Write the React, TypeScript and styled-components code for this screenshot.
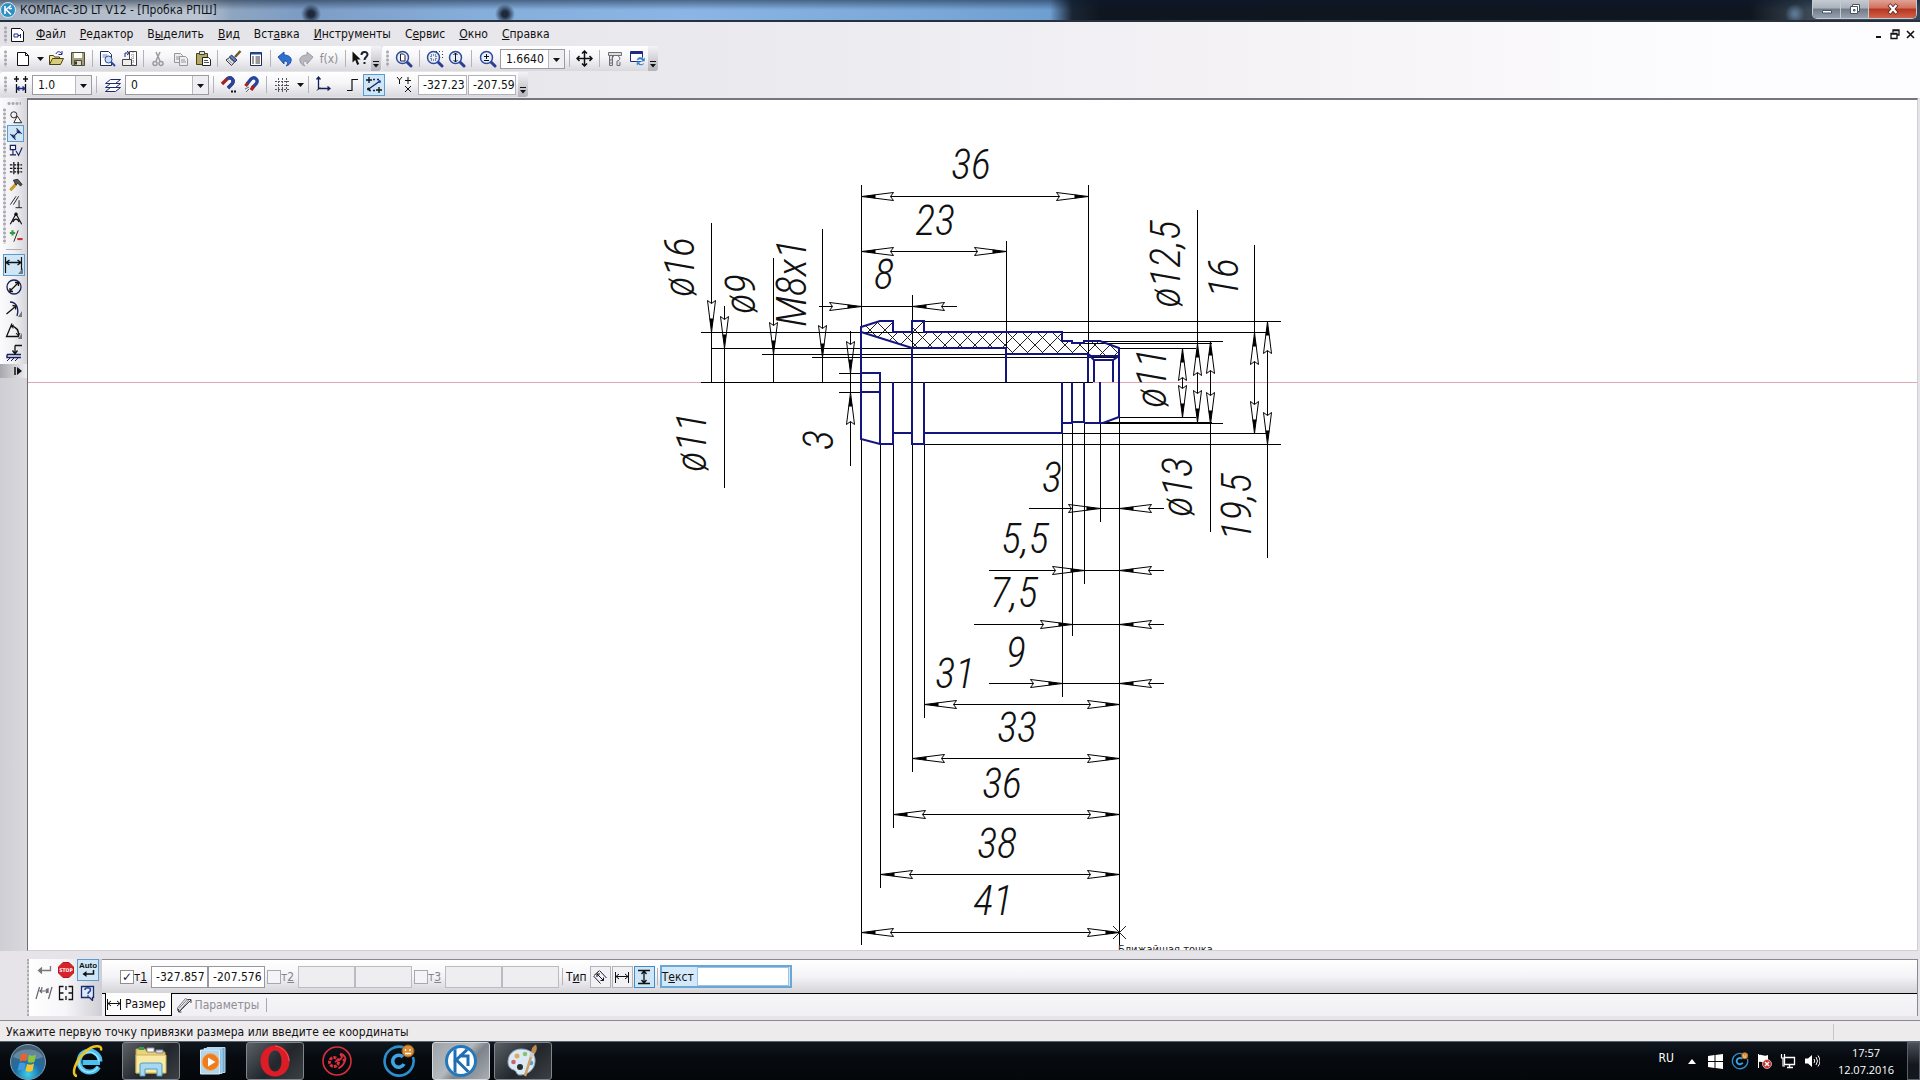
import React from 'react';
import styled, { createGlobalStyle, css } from 'styled-components';

const UI = '"DejaVu Sans Condensed", "DejaVu Sans", sans-serif';

const Global = createGlobalStyle`
  * { box-sizing: border-box; }
  body { margin: 0; background: #e6e4e8; }
  button, input, select { font: inherit; color: inherit; margin: 0; }
  button { padding: 0; border: 0; background: none; }
`;

/* ---------- window frame ---------- */

const Shell = styled.div`
  display: flex;
  flex-direction: column;
  min-height: 100vh;
  font: 12px/16px ${UI};
  color: #111;
  overflow: hidden;
`;

const TitleBar = styled.header`
  display: flex;
  align-items: center;
  height: 22px;
  padding-right: 3px;
  border-bottom: 2px solid #26303e;
  color: #10141c;
  background:
    radial-gradient(circle at 311px 14px, #1c2a3c 3px, #1c2a3c00 10px),
    radial-gradient(circle at 505px 14px, #1c2a3c 3px, #1c2a3c00 10px),
    radial-gradient(circle at 1795px 14px, #5c7590 2px, #5c759000 10px),
    linear-gradient(180deg, #0a1a3080 0, #0a1a3000 10px),
    linear-gradient(90deg, #a9b4c2 0, #bcc5d0 200px, #8ea5c0 232px, #7d9cc4 300px, #86aedb 480px, #8ab5e4 690px, #7ba8d8 920px, #6f9ed0 1050px, #1b2634 1072px, #10161f 1100px, #10161f calc(100% - 170px), #3c4955 calc(100% - 110px), #39465a 100%);
`;

const Title = styled.h1`
  flex: 1;
  display: flex;
  align-items: center;
  gap: 4px;
  margin: 0;
  padding-left: 0;
  font-size: 12px;
  font-weight: 400;
`;

const WindowControls = styled.div`
  display: flex;
  align-self: flex-start;
  height: 19px;
  border: 1px solid #c3cad2;
  border-top: 0;
  border-radius: 0 0 5px 5px;
  overflow: hidden;
`;

const WindowButton = styled.button<{ $close?: boolean }>`
  display: grid;
  place-items: center;
  width: ${p => (p.$close ? 47 : 28)}px;
  border-right: ${p => (p.$close ? '0' : '1px solid #c3cad2')};
  background: ${p => (p.$close
    ? 'linear-gradient(#e0a295 0, #d1705e 45%, #b83420 50%, #d0644c 100%)'
    : 'linear-gradient(#c6cbd2 0, #a9b1bb 45%, #6f7a88 50%, #98a2ae 100%)')};
`;

const Chrome = styled.div`
  background: linear-gradient(90deg, #e3e2e6 0, #ebeaee 40%, #f6f4f7 70%, #fdfcfe 90%);
`;

const MenuBar = styled.nav`
  display: flex;
  align-items: center;
  height: 24px;
  padding: 0 5px 0 4px;
`;

const MenuItem = styled.button`
  margin-right: 14px;
  white-space: nowrap;
`;

const MdiControls = styled.div`
  display: flex;
  align-items: center;
  gap: 6px;
  margin-left: auto;
`;

const Grip = styled.span<{ $flat?: boolean }>`
  flex: none;
  ${p => (p.$flat
    ? css`width: 14px; height: 3px; background: radial-gradient(circle, #a9a9b0 1px, #0000 2px) 0 0 / 4px 3px;`
    : css`width: 3px; height: 17px; background: radial-gradient(circle, #a9a9b0 1px, #0000 2px) 0 0 / 3px 4px;`)}
`;

const ToolRow = styled.div`
  display: flex;
  gap: 1px;
  height: 26px;
`;

const Toolbar = styled.div`
  display: flex;
  align-items: center;
  height: 25px;
  padding-left: 4px;
  border-radius: 3px;
  background: linear-gradient(#fff 0, #f6f5f8 45%, #d9d8dd 100%);
`;

const ToolButton = styled.button<{ $w?: number; $on?: boolean }>`
  display: grid;
  place-items: center;
  width: ${p => p.$w ?? 22}px;
  height: 22px;
  flex: none;
  ${p => p.$on && css`border: 1px solid #5b9bd0; background: #cfe6f7;`}
`;

const Separator = styled.span<{ $gap?: number }>`
  flex: none;
  width: 1px;
  height: 17px;
  margin: 0 ${p => p.$gap ?? 4}px;
  background: #b4b3ba;
`;

const Overflow = styled.button`
  align-self: stretch;
  display: flex;
  align-items: flex-end;
  justify-content: center;
  width: 10px;
  padding-bottom: 3px;
  border-radius: 0 3px 3px 0;
  background: linear-gradient(#f4f3f6, #b4b3ba);
`;

const Combo = styled.div<{ $w: number }>`
  position: relative;
  flex: none;
  width: ${p => p.$w}px;
  height: 20px;
  border: 1px solid #9c9ba2;
  background: linear-gradient(90deg, #fff calc(100% - 16px), #b9b8be calc(100% - 16px), #b9b8be calc(100% - 15px), #efeef1 calc(100% - 15px));
  select {
    appearance: none;
    width: 100%;
    height: 18px;
    padding: 0 0 0 5px;
    border: 0;
    background: none;
  }
  svg { position: absolute; right: 4px; top: 8px; pointer-events: none; }
`;

const Field = styled.input<{ $w: number }>`
  flex: none;
  width: ${p => p.$w}px;
  height: 20px;
  padding: 0 0 0 4px;
  border: 1px solid #b3b2b8;
  background: #fff;
`;

/* ---------- work area ---------- */

const Work = styled.main`
  flex: 1;
  display: flex;
  min-height: 0;
  padding-right: 2px;
`;

const SideBar = styled.aside`
  width: 27px;
  flex: none;
  background: linear-gradient(90deg, #cfced4 0, #d9d8dd 100%);
`;

const SideTools = styled.div`
  display: flex;
  flex-direction: column;
  align-items: center;
  padding-top: 4px;
  border-radius: 0 0 3px 3px;
  background: linear-gradient(90deg, #fbfafc 0, #f1f0f3 50%, #d5d4da 100%);
  & > ${Grip} { margin-bottom: 3px; }
`;

const PanelRow = styled.div`
  display: flex;
  align-items: center;
  height: 17px;
  gap: 1px;
`;

const PanelButton = styled.button<{ $on?: boolean }>`
  display: grid;
  place-items: center;
  width: 17px;
  height: 17px;
  svg { width: 14px; height: 14px; }
  ${p => p.$on && css`border: 1px solid #5b9bd0; background: #cfe6f7;`}
`;

const SideRule = styled.span`
  width: 16px;
  height: 1px;
  margin: 5px 0 4px;
  background: #b0afb6;
`;

const BigButton = styled.button<{ $on?: boolean }>`
  display: grid;
  place-items: center;
  width: 22px;
  height: 22px;
  ${p => p.$on && css`border: 1px solid #5b9bd0; background: #cfe6f7;`}
`;

const SideEnd = styled.button`
  display: flex;
  align-items: center;
  justify-content: flex-end;
  width: 100%;
  height: 14px;
  padding-right: 5px;
  background: linear-gradient(90deg, #a9a8af, #efeef1);
`;

const Sheet = styled.div`
  flex: 1;
  min-width: 0;
  min-height: 852px;
  display: flex;
  border: 1px solid #6c6b70;
  border-top: 2px solid #77767c;
  border-right-color: #d0cfd4;
  border-bottom-color: #d0cfd4;
  background: #fff;
  overflow: hidden;
  svg { flex: 1; width: 100%; min-width: 0; display: block; }
`;

/* ---------- property panel ---------- */

const Properties = styled.section`
  display: flex;
  margin: 8px 2px 0 27px;
  padding-bottom: 4px;
`;

const CommandPad = styled.div`
  display: grid;
  grid-template-columns: repeat(3, 22px);
  grid-auto-rows: 23px;
  align-content: start;
  width: 75px;
  flex: none;
  padding: 0 0 8px 4px;
  border-left: 2px dotted #a9a9b0;
  background: linear-gradient(90deg, #fff 0, #f6f5f8 50%, #cfced4 100%);
`;

const PropBody = styled.div`
  flex: 1;
  min-width: 0;
  border: 1px solid #8a8990;
  border-left: 0;
  border-bottom: 0;
  background: linear-gradient(#fff 0, #f0eff2 100%);
`;

const PropRow = styled.div`
  display: flex;
  align-items: center;
  height: 34px;
  padding-left: 18px;
  border-bottom: 1px solid #000;
  background: linear-gradient(#fff 0, #f4f3f6 50%, #d4d3d8 100%);
`;

const Pair = styled.div<{ $off?: boolean }>`
  display: flex;
  align-items: center;
  color: ${p => (p.$off ? '#85848a' : '#111')};
  label { display: flex; align-items: center; width: 31px; }
  ${Field} {
    height: 22px;
    width: 57px;
    background: ${p => (p.$off ? '#eeedf0' : '#fff')};
    border-color: ${p => (p.$off ? '#bcbbc1' : '#98979e')};
  }
`;

const Tick = styled.input`
  appearance: none;
  width: 14px;
  height: 14px;
  border: 1px solid #8e8d94;
  background: #fff;
  &:checked::after {
    content: '✓';
    display: block;
    font: 12px/12px "DejaVu Sans";
    text-align: center;
    color: #223;
  }
  &:disabled { border-color: #a9a8af; background: #f4f3f6; }
`;

const ModeLabel = styled.span`
  margin-right: 2px;
`;

const ModeButton = styled.button<{ $on?: boolean }>`
  display: grid;
  place-items: center;
  width: 21px;
  height: 22px;
  margin-left: 1px;
  border: 1px solid ${p => (p.$on ? '#3d8bc8' : '#b3b2b8')};
  background: ${p => (p.$on ? '#cfe6f7' : '#f1f0f3')};
`;

const TextBox = styled.label`
  display: flex;
  align-items: center;
  gap: 3px;
  height: 23px;
  padding: 0 1px 0 0;
  border: 2px solid #6aa7d6;
  background: #d3e8f8;
  input { width: 92px; height: 19px; border: 1px solid #9cc3e4; background: #fff; padding: 0 3px; }
`;

const Tabs = styled.div`
  display: flex;
  height: 22px;
`;

const Tab = styled.button<{ $on?: boolean }>`
  display: flex;
  align-items: center;
  gap: 3px;
  height: 22px;
  padding: 0 5px 0 4px;
  color: ${p => (p.$on ? '#111' : '#8f8e95')};
  ${p => (p.$on
    ? css`margin: -1px 0 0 3px; border: 1px solid #000; border-top: 0; background: #fdfdfe; height: 23px; padding: 0 5px 0 0;`
    : css`&::after { content: ''; width: 1px; height: 14px; margin-left: 4px; background: #a9a8af; }`)}
`;

const StatusBar = styled.footer`
  display: flex;
  align-items: center;
  height: 21px;
  border-top: 1px solid #8a8990;
  background: #eeebed;
  padding: 2px 0 0 6px;
`;

const StatusCell = styled.span`
  width: 87px;
  height: 16px;
  margin-left: auto;
  border-left: 1px solid #c6c4c9;
`;

/* ---------- taskbar ---------- */

const TaskBar = styled.footer`
  display: flex;
  align-items: center;
  height: 39px;
  border-top: 1px solid #59636c;
  background: linear-gradient(#10171e 0, #070b10 40%, #04070a 100%);
  color: #fff;
`;

const TaskButton = styled.button<{ $w: number; $open?: boolean; $active?: boolean }>`
  display: grid;
  place-items: center;
  flex: none;
  width: ${p => p.$w}px;
  height: 38px;
  margin: 0 2px;
  border: 1px solid #0000;
  border-radius: 3px;
  ${p => p.$open && css`border-color: #80868c; background: linear-gradient(135deg, #5c6166 0, #2b3036 45%, #23272c 55%, #3b4045 100%);`}
  ${p => p.$active && css`border-color: #d4d9dd; background: linear-gradient(135deg, #9da3a9 0, #b4b9be 45%, #7d838a 60%, #a9aeb4 100%);`}
`;

const Tray = styled.div`
  display: flex;
  align-items: center;
  height: 38px;
  margin-left: auto;
`;

const Language = styled.span`
  margin: 0 6px 6px 0;
`;

const TrayButton = styled.button`
  display: grid;
  place-items: center;
  width: 24px;
  height: 24px;
`;

const Clock = styled.time`
  margin: 0 13px 0 14px;
  font: 11px/17px "Open Sans", sans-serif;
  text-align: center;
`;

const ShowDesktop = styled.button`
  width: 13px;
  height: 38px;
  border: 1px solid #5a6067;
  background: linear-gradient(#4a5058 0, #14181d 60%);
`;

/* ---------- icons ---------- */

type IconProps = { size?: number; w?: number; h?: number; children: React.ReactNode; box?: string };
const Icon = ({ size = 16, w, h, box, children }: IconProps) => (
  <svg width={w ?? size} height={h ?? size} viewBox={box ?? `0 0 ${w ?? size} ${h ?? size}`} fill="none" stroke="#111" strokeWidth={1} aria-hidden="true">{children}</svg>
);

const Caret = () => <Icon w={7} h={4}><path d="M0 0h7L3.500 4z" fill="#111" stroke="none" /></Icon>;
const OverflowMark = () => <Icon w={6} h={7}><path d="M0 .5h6" /><path d="M0 3h6L3 6.500z" fill="#111" stroke="none" /></Icon>;

const Magnifier = ({ children }: { children?: React.ReactNode }) => (
  <Icon size={18}>
    <path d="M11 11l5 5" stroke="#2b3f92" strokeWidth={3} strokeLinecap="round" />
    <circle cx="7.500" cy="7.500" r="6" fill="#e6effa" stroke="#2c4a9c" strokeWidth={1.500} />
    {children}
  </Icon>
);

const I = {
  app: <Icon><circle cx="8" cy="8" r="7.500" fill="#2e8fc6" stroke="#d8ecf6" /><path d="M5 4v8M5.500 8L11 3.500M6 7.500l5 5M9 6.500h3" stroke="#fff" strokeWidth={1.600} /></Icon>,
  min: <Icon w={12} h={12}><path d="M1.500 7.500h9v2.500h-9z" fill="#fff" stroke="#4a5564" /></Icon>,
  max: <Icon w={12} h={12}><path d="M3.500 1.500h7v7h-7z" fill="#fff" stroke="#4a5564" /><path d="M1.500 3.500h7v7h-7z" fill="#fff" stroke="#4a5564" /><path d="M4.500 6.500h1.500v1.500h-1.500z" stroke="#4a5564" /></Icon>,
  close: <Icon w={12} h={12}><path d="M2 1.500l8 9M10 1.500l-8 9" stroke="#5a2a22" strokeWidth={4} /><path d="M2.500 2l7 8M9.500 2l-7 8" stroke="#fff" strokeWidth={2.200} /></Icon>,
  mdiDoc: <Icon w={13} h={16}><path d="M.5 2.500h9l3 3v10H.5z" fill="#fff" /><path d="M3 8h4v3H3zM9.500 8v4M7 9.500h3" stroke="#1f2a84" /></Icon>,
  mdiMin: <Icon w={7} h={9}><path d="M1 7h5" strokeWidth={2} /></Icon>,
  mdiMax: <Icon w={10} h={11}><path d="M3 3.500V1h6v5H7M1 4.500h6v5H1zM3 1.500h6M1 5h6" strokeWidth={1.300} /></Icon>,
  mdiX: <Icon w={9} h={9}><path d="M1 1l7 7M8 1l-7 7" strokeWidth={1.600} /></Icon>,
  newDoc: <Icon><path d="M2.500 1.500h8l3 3v10h-11z" fill="#fff" /><path d="M10.500 1.500v3h3" /></Icon>,
  open: <Icon size={17}><path d="M1.500 14.500v-9h4l1 1.500h5v2" fill="#f3e7a0" stroke="#4a4410" /><path d="M1.500 14.500l3-6h11l-3 6z" fill="#d8cb7c" stroke="#4a4410" /><path d="M8 4c1-3 4-3 6 0m0-3v3.500h-3.500" stroke="#1f2a84" /></Icon>,
  save: <Icon><path d="M1.500 1.500h13v13h-12l-1-1z" fill="#a39e7c" stroke="#4b4a35" /><path d="M4 2h8v5H4z" fill="#fff" stroke="none" /><path d="M4.500 9.500h7v5h-7z" fill="#dcdac8" stroke="#4b4a35" /><path d="M6 10.500v3" stroke="#333" strokeWidth={2} /></Icon>,
  preview: <Icon size={17}><path d="M1.500 1.500h8l3 3v11h-11z" fill="#fff" stroke="#1f2a55" /><path d="M3.500 5h5M3.500 7h4" stroke="#6c80b8" /><circle cx="9.500" cy="9.500" r="3.500" fill="#cfe0f5" stroke="#2c4a9c" /><path d="M12 12l4 4" stroke="#2c4a9c" strokeWidth={2} /></Icon>,
  docs: <Icon size={17}><path d="M8.500 1.500h7v14h-7z" fill="#fff" stroke="#444" /><path d="M10 5h4M10 8h4M10 11h4M12 2v13" stroke="#888" strokeDasharray="1 1" /><path d="M1.500 9.500h9v6h-9z" fill="#eee" stroke="#444" /><path d="M4 7V3h4M6 1l2.500 2L6 5" stroke="#1f2a84" /></Icon>,
  cut: <Icon><path d="M6 1l4 9M10 1L6 10" stroke="#9a9aa0" strokeWidth={1.500} /><circle cx="5" cy="12.500" r="2" stroke="#9a9aa0" strokeWidth={1.500} /><circle cx="11" cy="12.500" r="2" stroke="#9a9aa0" strokeWidth={1.500} /></Icon>,
  copy: <Icon><path d="M1.500 2.500h6l2 2v7h-8z" fill="#eee" stroke="#96959c" /><path d="M6.500 5.500h6l2 2v7h-8z" fill="#eee" stroke="#96959c" /><path d="M8 9h4M8 11h5M3 6h3M3 8h3" stroke="#96959c" /></Icon>,
  paste: <Icon size={17}><path d="M1.500 3.500h11v11h-11z" fill="#b5a765" stroke="#4a4410" /><path d="M4.500 1.500h5v3h-5z" fill="#ddd" stroke="#444" /><path d="M7.500 7.500h6l2 2v6h-8z" fill="#fff" stroke="#222" /><path d="M9 10.500h4M9 12.500h5" stroke="#555" /></Icon>,
  brush: <Icon size={17}><path d="M15.500 1L10 7" stroke="#6a5a2a" strokeWidth={2.500} /><path d="M6.500 5l5.500 5-2 2-5.500-5z" fill="#5b7fc0" stroke="#24356e" /><path d="M4.500 7.500l5 4.500-3 3.500L1 10z" fill="#e9edf6" stroke="#333" /><path d="M3 9.500l4 4M5 8.500l3 3" stroke="#777" /></Icon>,
  props: <Icon><path d="M2.500 1.500h11v13h-11z" fill="#fff" stroke="#1f2a55" /><path d="M3 2.500h10" stroke="#2c4a9c" strokeWidth={2} /><path d="M4 6h2M4 8h2M4 10h2M4 12h2M7.500 6H12M7.500 8H12M7.500 10H12M7.500 12H12" stroke="#333" /></Icon>,
  undo: <Icon><path d="M1 6l6-5v3c5 0 8 3 7 6-.5 3-3 4.500-5 5 2-2 2.500-5-2-5v3z" fill="#2f6fd0" stroke="#1d4ea8" /></Icon>,
  redo: <Icon><path d="M15 6L9 1v3C4 4 1 7 2 10c.5 3 3 4.500 5 5-2-2-2.500-5 2-5v3z" fill="#b9b8be" stroke="#9d9ca3" /></Icon>,
  help: <Icon w={18} h={17}><path d="M1.500 1.500v11l2.700-2.500 2 5 2-1-2-4.500h3.500z" fill="#111" stroke="none" /><path d="M10.500 5c0-4 6-4 6-.5 0 2.500-3 2.500-3 5.500M13.500 12v2" stroke="#1c2030" strokeWidth={2} /></Icon>,
  zoomDoc: <Magnifier><path d="M5.500 4h3l1.500 1.500V11H5.500z" fill="#fff" stroke="#223" /></Magnifier>,
  zoomArea: <Magnifier><path d="M5 5h5v5H5z" stroke="#223" strokeDasharray="1 1" /><path d="M10 1.500h6.500V10" stroke="#333" strokeDasharray="1 2" /></Magnifier>,
  zoomIn: <Magnifier><path d="M7.500 3v9M5.500 5l2-2 2 2M5.500 10l2 2 2-2" stroke="#111" /></Magnifier>,
  zoomScale: <Magnifier><path d="M7.500 4v5M5 6.500h5M5 10.500h5" stroke="#111" /></Magnifier>,
  pan: <Icon size={17}><path d="M8.500 1v15M1 8.500h15M6 3.500L8.500 1 11 3.500M6 13.500l2.500 2.500 2.500-2.500M3.500 6L1 8.500 3.500 11M13.500 6L16 8.500 13.500 11" strokeWidth={1.500} /></Icon>,
  crane: <Icon><path d="M1.500 1.500h13v3h-13zM2.500 4.500h3v10h-3zM11 5c3 1 2 5-1 5v4.500h3V11" fill="#ddd" stroke="#6f6e75" /><path d="M2 12h4M2 9h4M7 4l-2 4" stroke="#6f6e75" /></Icon>,
  refresh: <Icon size={17}><path d="M1.500 1.500h12v10h-12z" fill="#fff" stroke="#1f2a84" /><path d="M2 3h11" stroke="#1f2a84" strokeWidth={2} /><path d="M7.500 10a4 4 0 0 1 7-1.500l1.500-1v4h-4l1-1a2.500 2.500 0 0 0-4 0zM15.500 13a4 4 0 0 1-6.500 1.500L7.500 16v-4h4l-1 1.200a2.500 2.500 0 0 0 3.500 0z" fill="#2f7fd0" stroke="#fff" strokeWidth={.4} /></Icon>,
  step: <Icon size={17}><path d="M4.500 0v6M2 3h5M13.500 0v6M11 3h5M4.500 8v9M13.500 8v9" strokeWidth={1.300} /><path d="M5 12.500h8M7.500 10.500l-2.500 2 2.500 2M10.500 10.500l2.500 2-2.500 2" stroke="#1f2a84" strokeWidth={1.300} /></Icon>,
  layers: <Icon size={18}><path d="M1.500 15.500l5-4h10l-5 4zM1.500 11.500l5-4h10l-5 4zM1.500 7.500l5-4h10l-5 4z" fill="#fff" stroke="#1c2c6a" /></Icon>,
  magnetDots: <Icon w={18} h={17}><path d="M2 8l5-5c4-3 8 1 5 5l-4 4" stroke="#a52222" strokeWidth={3.400} /><path d="M7 3c4-3 8 1 5 5l-4 4" stroke="#24469c" strokeWidth={3.400} /><path d="M11 15.500h6" strokeWidth={2} strokeDasharray="2 1" /></Icon>,
  magnet: <Icon w={17} h={17}><path d="M4 8l4-5c4-3 8 1 5 5l-4 4" stroke="#24469c" strokeWidth={3.400} /><path d="M5 7L2.500 10M11 10l-3 4" stroke="#a52222" strokeWidth={3.400} /><path d="M2 13l4-2M3 16l3-3" stroke="#666" /></Icon>,
  grid: <Icon><path d="M1 4.500h14M1 8.500h14M1 12.500h14M4.500 1v14M8.500 1v14M12.500 1v14" stroke="#55545c" strokeDasharray="2 1" /></Icon>,
  axes: <Icon size={17}><path d="M4.500 1v11.500H16M2.500 3.500L4.500 1l2 2.500M13.500 10.500l2.500 2-2.500 2" stroke="#16205c" strokeWidth={1.300} /><path d="M3 14.500l3-3" /></Icon>,
  ortho: <Icon size={17}><path d="M3 14.500h5v-11h6" strokeWidth={1.200} /></Icon>,
  snaps: <Icon size={18}><path d="M4 1v6M1 4h6M14 11v6M11 14h6" strokeWidth={1.300} /><path d="M3 13.500L15 5M8 3.500h2M12 3.500h2M4 14.500h2M8 14.500h2" stroke="#16205c" strokeWidth={1.300} /><circle cx="3.500" cy="13" r="1.500" fill="#111" stroke="none" /><circle cx="14.500" cy="5.500" r="1.500" fill="#24469c" stroke="none" /></Icon>,
  yx: <Icon w={17} h={17}><path d="M1 1l2.500 3L6 1M3.500 4v4M12 1v7M9 4.500h6M9 10l6 6M15 10l-6 6" /></Icon>,
  geometry: <Icon><circle cx="5.500" cy="5.500" r="3.500" /><path d="M9.500 7l5 7.500h-9z" fill="#fff" /></Icon>,
  dims: <Icon><path d="M1.500 8l6 6.500M8.500 1.500l6 6.500M4.500 11.500l7-7M4.500 8.500v3h3M8.500 4.500h3v3" stroke="#16205c" strokeWidth={1.200} /></Icon>,
  marks: <Icon><path d="M1.500 1.500h6v5h-6zM4.500 6.500v6M1 12.500h7M8 8l3 5 4-9" stroke="#16205c" strokeWidth={1.300} /></Icon>,
  table: <Icon><path d="M1 4.500h14M1 8.500h14M1 12.500h14M5.500 1v14M10.500 1v14" strokeDasharray="3 1" strokeWidth={1.400} /></Icon>,
  hammer: <Icon><path d="M1.500 14L8 7" stroke="#c89a28" strokeWidth={3.500} /><path d="M5 2.500l5-1 5 6-2 1.500-3-3-2 2z" fill="#4a5a52" stroke="#222" /></Icon>,
  parallel: <Icon><path d="M1.500 11L8 1.500M5 11l6-9.500M11.500 6v8.500M7.500 14.500H15" /></Icon>,
  measure: <Icon><path d="M1.500 14L8 2l6.500 12M4.500 11.500C6 7 10 7 11.500 11.500" strokeWidth={1.300} /><circle cx="8" cy="2.500" r="1.500" fill="#111" /></Icon>,
  plusMinus: <Icon><path d="M1 4.500h6M4 1.500v6" stroke="#2f9a48" strokeWidth={2.400} /><path d="M10.500 1.500L5.500 14.500" /><path d="M9.500 11.500h6" stroke="#c43030" strokeWidth={2.400} /></Icon>,
  dimLinear: <Icon size={20}><path d="M1.500 2v16M17.500 2v14" strokeWidth={1.200} /><path d="M2 7.500h15M5.500 5L2 7.500 5.500 10M13.500 5l3.500 2.500-3.500 2.500" strokeWidth={1.300} /><path d="M19 13v6h-5z" fill="#77767c" stroke="none" /></Icon>,
  dimDiameter: <Icon size={18}><circle cx="9" cy="9" r="7" stroke="#16205c" strokeWidth={1.300} /><path d="M4.500 13.500l9-9M5 10v3.500h3M10 4.500h3.500V8" strokeWidth={1.300} /></Icon>,
  dimRadius: <Icon size={18}><path d="M5 2c7 0 9 7 7 14" stroke="#16205c" strokeWidth={1.300} /><path d="M1.500 14L11 6M7.500 5.500L11 6l-.5 3.500" strokeWidth={1.300} /><path d="M17 11v6h-4z" fill="#77767c" stroke="none" /></Icon>,
  dimAngle: <Icon size={18}><path d="M7 1.500L1.500 14.500H14M6 4c6 1 8 5 7.500 10" strokeWidth={1.300} /><path d="M9 3L6 4l2 2.500M11 11l2.500 3 1.500-3" /><path d="M17 11v6h-4z" fill="#77767c" stroke="none" /></Icon>,
  dimHeight: <Icon size={18}><path d="M2 10.500h14M2 10.500v3h14" stroke="#16205c" strokeWidth={1.400} /><path d="M2 17l3-3M6 17l3-3M10 17l3-3" stroke="#16205c" /><path d="M10 1.500h7M10 1.500V10M7.500 6.500L10 10l2.500-3.500" strokeWidth={1.300} /></Icon>,
  sideArrow: <Icon w={8} h={8}><path d="M1 0v8" strokeWidth={1.500} /><path d="M3 0l5 4-5 4z" fill="#111" stroke="none" /></Icon>,
  enter: <Icon><path d="M14.500 4v4.500H3M6 5.500L2.500 8.500 6 11.500" stroke="#77767c" strokeWidth={1.300} /><path d="M6 5.500v6L2.500 8.500z" fill="#77767c" stroke="none" /></Icon>,
  lineMarks: <Icon size={18}><path d="M1 15L4.500 3M13.500 15L17 3M6.500 6L7 3M13 9V4M5 7h8M7 5L5 7l2 2M11 5l2 2-2 2" stroke="#66656c" strokeWidth={1.200} /></Icon>,
  target: <Icon><path d="M5.500 1.500h-4v13h4M10.500 1.500h4v13h-4M8 1v4M8 11v4M1.500 8h4M10.500 8h4" strokeWidth={1.300} /></Icon>,
  question: <Icon><path d="M1.500 1.500h12v11h-1v3l-3-3h-8z" fill="#dceafa" stroke="#1c2c6a" strokeWidth={1.300} /><path d="M5 5c0-3 5.500-3 5.500 0 0 2-2.500 1.500-2.500 4M8 10.200v1.500" stroke="#24469c" strokeWidth={1.600} /></Icon>,
  typeSlant: <Icon><path d="M1.500 7L8.500 14.500M7.500 1.500L14.500 9" stroke="#16205c" /><path d="M2 6.500l5-4.500M5 5l6.500 6.500M5 8V5h3M11.500 8.500v3h-3" /></Icon>,
  typeHor: <Icon><path d="M1.500 3v11M14.500 3v11M2 7.500h12M5 5L2 7.500 5 10M11 5l3 2.500-3 2.500" /></Icon>,
  typeVer: <Icon><path d="M2 1.500h12M2 14.500h12M8 2v12M5.500 5L8 2l2.500 3M5.500 11L8 14l2.500-3" strokeWidth={1.300} /></Icon>,
  pencil: <Icon><path d="M1.500 11l8-9.500 3 2-8 9.500-3 .5zM3 11.500L11 2.500" stroke="#77767c" /><path d="M3 15L15 3M11.500 2.500H15V6M2.500 12v3h3" stroke="#44434a" /></Icon>,
};

const StopIcon = () => (
  <Icon><path d="M5 .5h6L15.500 5v6L11 15.500H5L.5 11V5z" fill="#d9232b" stroke="#b01820" /><text x="8" y="10" textAnchor="middle" fontSize="5" fontWeight="700" fontFamily="DejaVu Sans Condensed" fill="#fff" stroke="none">STOP</text></Icon>
);
const AutoIcon = () => (
  <Icon size={18}><text x="9" y="7" textAnchor="middle" fontSize="8" fontWeight="700" fontFamily="Liberation Sans" fill="#111" stroke="none">Auto</text><path d="M14.500 9v4H5" strokeWidth={1.500} /><path d="M7.500 10v6L3.500 13z" fill="#111" stroke="none" /></Icon>
);

/* ---------- taskbar pictures ---------- */

const StartOrb = () => (
  <Icon size={38}>
    <defs><radialGradient id="orb" cx="50%" cy="85%" r="80%"><stop offset="0" stopColor="#3fd0f0" /><stop offset=".45" stopColor="#1d6ea6" /><stop offset="1" stopColor="#4a6070" /></radialGradient></defs>
    <circle cx="19" cy="19" r="17.500" fill="url(#orb)" stroke="#7fa4bc" />
    <path d="M4 14C8 4 30 4 34 14c-8 4-22 4-30 0z" fill="#fff" opacity=".22" stroke="none" />
    <path d="M12 11.500c2.500-1.500 4.500-1 6.500 0l-1.500 7c-2-1-4-1-6.500.5z" fill="#e8622c" stroke="none" />
    <path d="M20 12c2.500 1.200 4.500 1 7-.5l-1.500 7.500c-2.500 1-4.500 1-7 0z" fill="#8cc43c" stroke="none" />
    <path d="M10 20.500c2.500-1.500 4.500-1 6.500 0l-1.500 7c-2-1-4-1-6.500.5z" fill="#3f9be0" stroke="none" />
    <path d="M18 21c2.500 1.200 4.500 1 7-.5L23.500 28c-2.500 1-4.500 1-7 0z" fill="#f6c52c" stroke="none" />
  </Icon>
);
const Ie = () => (
  <Icon size={34}>
    <path d="M29 18.500H11.500M27.500 23a10.500 10.500 0 1 1 1.500-5.500" stroke="#4cc0ee" strokeWidth={5} />
    <path d="M27 22.500a10 10 0 1 1 1-5" stroke="#9fe2fa" strokeWidth={1.500} />
    <path d="M6 32C-1 31 5 16 14 8 21 1 32 0 30 6.500" stroke="#f2c21e" strokeWidth={2.500} />
  </Icon>
);
const Folder = () => (
  <Icon w={34} h={34}>
    <path d="M2 5h9l2 3h18v21H2z" fill="#e9d27c" stroke="#b99a3c" /><path d="M5 3h5v3H5z" fill="#3c9a50" stroke="none" /><path d="M13 4h7v4h-7z" fill="#fff" stroke="#999" /><path d="M22 6h7v3h-7z" fill="#d8e4f2" stroke="#889" />
    <path d="M2 11h30v18H2z" fill="#f8e9a4" stroke="#cdb35a" />
    <path d="M6 32V21q0-2 2-2h18q2 0 2 2v11h-5v-7H11v7z" fill="#a6d8f2" stroke="#4f9cc8" />
  </Icon>
);
const MediaPlayer = () => (
  <Icon w={28} h={30}>
    <path d="M8 1.500h18v25H8z" fill="#6ea9d4" stroke="#b7d7ec" /><path d="M5 2.500h18v25H5z" fill="#8abfe2" stroke="#b7d7ec" /><path d="M1.500 4h19v24h-19z" fill="#b2d5ee" stroke="#dceefa" />
    <circle cx="11.500" cy="16" r="8.500" fill="#ee7d20" stroke="#f8b06a" /><path d="M9 11.500l7.500 4.500L9 20.500z" fill="#fff" stroke="none" />
  </Icon>
);
const Opera = () => (
  <Icon size={34}><path fillRule="evenodd" d="M17 1.500c8.500 0 14.500 6.500 14.500 15.500S25.500 32.500 17 32.500 2.500 26 2.500 17 8.500 1.500 17 1.500zm0 5c-4 0-6.500 4.500-6.500 10.500S13 27.500 17 27.500 23.500 23 23.500 17 21 6.500 17 6.500z" fill="#dc1c26" stroke="none" /><path d="M17 2c4 0 14 5 14 15" stroke="#f05a5a" /></Icon>
);
const RedGear = () => (
  <Icon size={32}><circle cx="16" cy="16" r="14" stroke="#d9303a" strokeWidth={1.600} /><circle cx="13" cy="17" r="4.500" stroke="#d9303a" strokeWidth={3} strokeDasharray="3 1" /><path d="M14 17l5-3M19 9q4 0 5.500 4.500-1 6.500-7 10M19 9l2 3-2 3" stroke="#d9303a" strokeWidth={1.800} /><circle cx="23" cy="15" r="1.500" fill="#d9303a" stroke="none" /></Icon>
);
const BlueC = ({ size = 34 }: { size?: number }) => (
  <Icon size={size} box="0 0 34 34">
    <path d="M22 3.500A14.500 14.500 0 1 0 31 13" stroke="#2b8fce" strokeWidth={2.600} /><path d="M21 13a6 6 0 1 0 1 7" stroke="#3aa4e4" strokeWidth={3.600} />
    <circle cx="26" cy="7" r="6" fill="#d98d34" stroke="#9c5c18" /><path d="M23.500 5v2M28 5v2M23 9.500h6" stroke="#fff" strokeWidth={1.300} />
  </Icon>
);
const Kompas = () => (
  <Icon size={34}>
    <defs><clipPath id="disc"><circle cx="17" cy="17" r="13" /></clipPath></defs>
    <circle cx="17" cy="17" r="14.500" fill="#fff" stroke="#2378bc" strokeWidth={3} />
    <path d="M11 3v28M10 18L28 1M12 15.500l17 17M15 12h9v10" stroke="#1f6db4" strokeWidth={3} clipPath="url(#disc)" />
  </Icon>
);
const Paint = () => (
  <Icon size={36}><path d="M16 6c9 0 15 5 14 13-.500 8-8 13-15 13-4 0-3-4-6-5-4-1-6-4-6-8C3 11 9 6 16 6z" fill="#dbe9f4" stroke="#8aa4b8" /><circle cx="12" cy="13" r="2.500" fill="#e0a860" stroke="none" /><circle cx="20" cy="11" r="2.300" fill="#8cbf78" stroke="none" /><circle cx="8.500" cy="19" r="2.300" fill="#d0606a" stroke="none" /><circle cx="15" cy="24" r="3" fill="#222c34" stroke="none" /><circle cx="26" cy="20" r="2.300" fill="#5c9cd8" stroke="none" /><path d="M20 33l6-19" stroke="#c8a468" strokeWidth={2.500} /><path d="M26 14l2-5" stroke="#ccc" strokeWidth={4} /><path d="M26.500 9.500q-1-5 4.500-8 2 5-1 9z" fill="#c08a50" stroke="none" /></Icon>
);

/* ---------- the drawing ---------- */

type Dir = 'l' | 'r' | 'u' | 'd';
const turn: Record<Dir, number> = { l: 0, u: 90, r: 180, d: 270 };

// Arrow head whose tip points in the given direction.
const Arrow = ({ x, y, dir }: { x: number; y: number; dir: Dir }) => (
  <g transform={`translate(${x + 0.5} ${y + 0.5}) rotate(${turn[dir]})`} stroke="#000" strokeWidth={1}>
    <path d="M0 0L32 -4L29 0L32 4Z" fill="#fff" />
    <path d="M2 0L14 -2V2Z" fill="#000" stroke="none" />
  </g>
);

// Thin lines that the arrow heads sit on: x1, y1, x2, y2.
const dimensionLines = [
  [861, 196, 1088, 196], [861, 251, 1006, 251], [818, 306, 956, 306],
  [711, 222, 711, 382], [724, 305, 724, 487], [773, 257, 773, 382], [822, 228, 822, 382], [850, 330, 850, 465],
  [1182, 348, 1182, 417], [1197, 209, 1197, 423], [1210, 341, 1210, 531], [1254, 244, 1254, 433], [1267, 321, 1267, 557],
  [1028, 508, 1163, 508], [988, 570, 1163, 570], [973, 624, 1163, 624], [988, 683, 1163, 683],
  [924, 704, 1119, 704], [912, 758, 1119, 758], [893, 814, 1119, 814], [880, 874, 1119, 874], [861, 932, 1119, 932],
];

const extensionLines = [
  [861, 184, 861, 944], [1088, 184, 1088, 382], [1006, 240, 1006, 382], [912, 294, 912, 771],
  [880, 392, 880, 887], [893, 382, 893, 827], [924, 382, 924, 717], [1062, 382, 1062, 696], [1072, 382, 1072, 635], [1084, 382, 1084, 583], [1100, 382, 1100, 521], [1119, 348, 1119, 944],
  [924, 321, 1280, 321], [700, 332, 1268, 332], [711, 348, 912, 348], [761, 354, 1088, 354], [811, 357, 1119, 357],
  [838, 373, 880, 373], [700, 382, 1092, 382], [838, 392, 880, 392],
  [1084, 341, 1222, 341], [1072, 343, 1211, 343], [1119, 348, 1195, 348], [1119, 417, 1195, 417], [1100, 422, 1211, 422], [1100, 423, 1222, 423], [1062, 433, 1268, 433], [924, 444, 1280, 444],
];

const arrows: [number, number, Dir][] = [
  [861, 196, 'l'], [1088, 196, 'r'], [861, 251, 'l'], [1006, 251, 'r'], [861, 306, 'r'], [912, 306, 'l'],
  [711, 332, 'd'], [724, 348, 'd'], [773, 354, 'd'], [822, 357, 'd'], [850, 373, 'd'], [850, 392, 'u'],
  [1182, 348, 'u'], [1182, 417, 'd'], [1197, 343, 'u'], [1197, 422, 'd'], [1210, 341, 'u'], [1210, 424, 'd'],
  [1254, 332, 'u'], [1254, 433, 'd'], [1267, 321, 'u'], [1267, 444, 'd'],
  [1100, 508, 'r'], [1119, 508, 'l'], [1084, 570, 'r'], [1119, 570, 'l'], [1072, 624, 'r'], [1119, 624, 'l'], [1062, 683, 'r'], [1119, 683, 'l'],
  [924, 704, 'l'], [1119, 704, 'r'], [912, 758, 'l'], [1119, 758, 'r'], [893, 814, 'l'], [1119, 814, 'r'],
  [880, 874, 'l'], [1119, 874, 'r'], [861, 932, 'l'], [1119, 932, 'r'],
];

// Centre and baseline of each number; "up" ones read from bottom to top.
const numbers: { t: string; x: number; y: number; up?: boolean }[] = [
  { t: '36', x: 971, y: 179 }, { t: '23', x: 935, y: 235 }, { t: '8', x: 884, y: 289 },
  { t: '3', x: 1052, y: 492 }, { t: '5,5', x: 1025, y: 553 }, { t: '7,5', x: 1014, y: 607 }, { t: '9', x: 1016, y: 667 },
  { t: '31', x: 955, y: 688 }, { t: '33', x: 1017, y: 742 }, { t: '36', x: 1002, y: 798 }, { t: '38', x: 997, y: 858 }, { t: '41', x: 993, y: 915 },
  { t: 'ø16', x: 694, y: 267, up: true }, { t: 'ø9', x: 755, y: 294, up: true }, { t: 'М8х1', x: 806, y: 283, up: true },
  { t: 'ø11', x: 706, y: 442, up: true }, { t: '3', x: 833, y: 440, up: true }, { t: 'ø12,5', x: 1180, y: 264, up: true },
  { t: '16', x: 1238, y: 278, up: true }, { t: 'ø11', x: 1166, y: 378, up: true }, { t: 'ø13', x: 1192, y: 487, up: true }, { t: '19,5', x: 1251, y: 507, up: true },
];

const Num = styled.text`
  font: italic 300 42px "Roboto Condensed", "Roboto", sans-serif;
  text-anchor: middle;
  fill: #111;
`;

const Snap = styled.text`
  font: 11px ${UI};
  fill: #222;
`;

const section = 'M861 327L880 321H893V332H912V321H924V332H1062V341H1072V343H1084V341H1100L1119 348V356H1091L1088 354H1006V348H912L861 332Z';

const Drawing = () => (
  <svg aria-label="Чертёж: Пробка РПШ">
    <defs>
      <pattern id="hatch" width="15" height="15" patternUnits="userSpaceOnUse">
        <path d="M0 0L15 15M15 0L0 15" stroke="#222" strokeWidth={1} />
      </pattern>
    </defs>
    <path d="M0 282.500H4000" stroke="#d9a9b4" />
    <g transform="translate(-28 -100)">
      <g stroke="#000" shapeRendering="crispEdges">
        {dimensionLines.map(([a, b, c, d], i) => <line key={i} x1={a + 0.5} y1={b + 0.5} x2={c + 0.5} y2={d + 0.5} />)}
      </g>
      {arrows.map(([x, y, dir], i) => <Arrow key={i} x={x} y={y} dir={dir} />)}
      <path d={section} fill="url(#hatch)" />
      <g stroke="#000" shapeRendering="crispEdges">
        {extensionLines.map(([a, b, c, d], i) => <line key={i} x1={a + 0.5} y1={b + 0.5} x2={c + 0.5} y2={d + 0.5} />)}
      </g>
      <g fill="none" stroke="#15157e" strokeWidth={2}>
        <path d={section} />
        <path d="M861 332V439L880 444H893V382M893 433H912M912 348V444H924V382M924 433H1062V382M1062 423H1072V382M1072 422H1084V382M1084 423H1103L1119 417V348" />
        <path d="M861 373H880V444M861 392H880M1006 348V382M1088 354V382M1094 360V382M1113 360V382M1088 354L1094 360H1113L1119 356M1100 382V423" />
      </g>
      <path d="M1113 926L1126 939M1126 926L1113 939" stroke="#222" />
      {numbers.map((n, i) => <Num key={i} transform={`translate(${n.x} ${n.y})${n.up ? ' rotate(-90)' : ''}`}>{n.t}</Num>)}
      <Snap x="1118" y="953">Ближайшая точка</Snap>
    </g>
  </svg>
);

/* ---------- page ---------- */

const menu: [string, string, string][] = [
  ['', 'Ф', 'айл'], ['', 'Р', 'едактор'], ['В', 'ы', 'делить'], ['', 'В', 'ид'], ['Вст', 'а', 'вка'],
  ['', 'И', 'нструменты'], ['С', 'е', 'рвис'], ['', 'О', 'кно'], ['', 'С', 'правка'],
];

const Tool = ({ name, icon, w, on, disabled }: { name: string; icon: React.ReactNode; w?: number; on?: boolean; disabled?: boolean }) => (
  <ToolButton aria-label={name} $w={w} $on={on} disabled={disabled}>{icon}</ToolButton>
);

const Drop = ({ name, value, w }: { name: string; value: string; w: number }) => (
  <Combo $w={w}><select aria-label={name}><option>{value}</option></select><Caret /></Combo>
);

const Fx = styled.span`
  color: #8f8e95;
`;

const ParamPair = ({ n, a = '', b = '', off }: { n: string; a?: string; b?: string; off?: boolean }) => (
  <Pair $off={off}>
    <label><Tick type="checkbox" defaultChecked={!off} disabled={off} /><span>т<u>{n}</u></span></label>
    <Field $w={57} aria-label={`т${n} x`} defaultValue={a} disabled={off} />
    <Field $w={57} aria-label={`т${n} y`} defaultValue={b} disabled={off} />
  </Pair>
);

const Spacer = styled.span<{ $w: number }>`
  flex: none;
  width: ${p => p.$w}px;
`;

const sidePanels: [string, React.ReactNode, boolean?][] = [
  ['Геометрия', I.geometry], ['Размеры', I.dims, true], ['Обозначения', I.marks], ['Таблицы', I.table],
  ['Редактирование', I.hammer], ['Параметризация', I.parallel], ['Измерения', I.measure], ['Выделение', I.plusMinus],
];

const sideCommands: [string, React.ReactNode, boolean?][] = [
  ['Линейный размер', I.dimLinear, true], ['Диаметральный размер', I.dimDiameter], ['Радиальный размер', I.dimRadius],
  ['Угловой размер', I.dimAngle], ['Размер высоты', I.dimHeight],
];

export default function App() {
  return (
    <Shell>
      <Global />
      <TitleBar>
        <Title>{I.app}КОМПАС-3D LT V12 - [Пробка РПШ]</Title>
        <WindowControls>
          <WindowButton aria-label="Свернуть">{I.min}</WindowButton>
          <WindowButton aria-label="Восстановить">{I.max}</WindowButton>
          <WindowButton aria-label="Закрыть" $close>{I.close}</WindowButton>
        </WindowControls>
      </TitleBar>

      <Chrome>
        <MenuBar>
          <Grip /><Spacer $w={4} />{I.mdiDoc}<Spacer $w={12} />
          {menu.map(([a, u, b]) => <MenuItem key={a + u + b}>{a}<u>{u}</u>{b}</MenuItem>)}
          <MdiControls>
            <ToolButton $w={9} aria-label="Свернуть документ">{I.mdiMin}</ToolButton>
            <ToolButton $w={11} aria-label="Восстановить документ">{I.mdiMax}</ToolButton>
            <ToolButton $w={9} aria-label="Закрыть документ">{I.mdiX}</ToolButton>
          </MdiControls>
        </MenuBar>

        <ToolRow>
          <Toolbar>
            <Grip /><Spacer $w={4} />
            <Tool name="Создать" icon={I.newDoc} w={24} /><Tool name="Список" icon={<Caret />} w={10} />
            <Tool name="Открыть" icon={I.open} /><Tool name="Сохранить" icon={I.save} />
            <Separator $gap={3} />
            <Tool name="Просмотр" icon={I.preview} /><Tool name="Менеджер" icon={I.docs} />
            <Separator $gap={3} />
            <Tool name="Вырезать" icon={I.cut} disabled /><Tool name="Копировать" icon={I.copy} w={23} disabled /><Tool name="Вставить" icon={I.paste} />
            <Separator $gap={3} />
            <Tool name="Копировать свойства" icon={I.brush} w={24} /><Tool name="Свойства" icon={I.props} />
            <Separator $gap={3} />
            <Tool name="Отменить" icon={I.undo} /><Tool name="Повторить" icon={I.redo} w={20} disabled />
            <Tool name="Переменные" icon={<Fx>f(x)</Fx>} w={26} disabled />
            <Separator $gap={3} />
            <Tool name="Справка" icon={I.help} /><Overflow aria-label="Ещё"><OverflowMark /></Overflow>
          </Toolbar>
          <Toolbar>
            <Grip /><Spacer $w={3} />
            <Tool name="Показать всё" icon={I.zoomDoc} w={23} />
            <Separator />
            <Tool name="Увеличить рамкой" icon={I.zoomArea} /><Tool name="Приблизить" icon={I.zoomIn} />
            <Separator $gap={3} />
            <Tool name="Масштаб" icon={I.zoomScale} w={25} />
            <Drop name="Текущий масштаб" value="1.6640" w={65} />
            <Separator />
            <Tool name="Сдвинуть" icon={I.pan} w={21} /><Separator />
            <Tool name="Перестроить" icon={I.crane} /><Tool name="Обновить" icon={I.refresh} />
            <Overflow aria-label="Ещё"><OverflowMark /></Overflow>
          </Toolbar>
        </ToolRow>

        <ToolRow>
          <Toolbar>
            <Grip /><Spacer $w={1} />
            <Tool name="Шаг курсора" icon={I.step} w={24} />
            <Drop name="Шаг" value="1.0" w={60} />
            <Separator />
            <Tool name="Состояния слоёв" icon={I.layers} w={24} />
            <Drop name="Слой" value="0" w={84} />
            <Separator />
            <Tool name="Привязки" icon={I.magnetDots} /><Tool name="Запретить привязки" icon={I.magnet} w={23} />
            <Separator $gap={3} />
            <Tool name="Сетка" icon={I.grid} w={24} /><Tool name="Настройка сетки" icon={<Caret />} w={12} />
            <Separator $gap={2} />
            <Tool name="Локальная система координат" icon={I.axes} /><Spacer $w={8} />
            <Tool name="Ортогональное черчение" icon={I.ortho} /><Tool name="Округление" icon={I.snaps} on />
            <Spacer $w={11} />{I.yx}<Spacer $w={5} />
            <Field $w={49} aria-label="X" defaultValue="-327.23" /><Spacer $w={1} />
            <Field $w={48} aria-label="Y" defaultValue="-207.59" /><Spacer $w={2} />
            <Overflow aria-label="Ещё"><OverflowMark /></Overflow>
          </Toolbar>
        </ToolRow>
      </Chrome>

      <Work>
        <SideBar>
          <SideTools>
            <Grip $flat />
            {sidePanels.map(([name, icon, on]) => (
              <PanelRow key={name}><Grip /><PanelButton aria-label={name} $on={on}>{icon}</PanelButton></PanelRow>
            ))}
            <SideRule />
            {sideCommands.map(([name, icon, on]) => <BigButton key={name} aria-label={name} $on={on}>{icon}</BigButton>)}
            <SideEnd aria-label="Ещё команды">{I.sideArrow}</SideEnd>
          </SideTools>
        </SideBar>
        <Sheet><Drawing /></Sheet>
      </Work>

      <Properties>
        <CommandPad>
          <Tool name="Создать объект" icon={I.enter} disabled /><Tool name="Прервать" icon={<StopIcon />} /><Tool name="Автосоздание" icon={<AutoIcon />} on />
          <Tool name="Параллельно" icon={I.lineMarks} disabled /><Tool name="Указать объект" icon={I.target} /><Tool name="Подсказка" icon={I.question} />
        </CommandPad>
        <PropBody>
          <PropRow>
            <ParamPair n="1" a="-327.857" b="-207.576" /><Spacer $w={2} />
            <ParamPair n="2" off /><Spacer $w={2} />
            <ParamPair n="3" off />
            <Separator $gap={3} />
            <ModeLabel>Т<u>и</u>п</ModeLabel>
            <ModeButton aria-label="Параллельно объекту">{I.typeSlant}</ModeButton>
            <ModeButton aria-label="Горизонтальный">{I.typeHor}</ModeButton>
            <ModeButton aria-label="Вертикальный" $on>{I.typeVer}</ModeButton>
            <Separator $gap={2} />
            <TextBox><span>Т<u>е</u>кст</span><input type="text" /></TextBox>
          </PropRow>
          <Tabs>
            <Tab $on>{I.typeHor}Размер</Tab>
            <Tab>{I.pencil}Параметры</Tab>
          </Tabs>
        </PropBody>
      </Properties>

      <StatusBar>
        <span>Укажите первую точку привязки размера или введите ее координаты</span>
        <StatusCell />
      </StatusBar>

      <TaskBar>
        <TaskButton $w={52} aria-label="Пуск"><StartOrb /></TaskButton>
        <TaskButton $w={60} aria-label="Internet Explorer"><Ie /></TaskButton>
        <TaskButton $w={58} $open aria-label="Проводник"><Folder /></TaskButton>
        <TaskButton $w={58} aria-label="Проигрыватель"><MediaPlayer /></TaskButton>
        <TaskButton $w={58} $open aria-label="Opera"><Opera /></TaskButton>
        <TaskButton $w={58} aria-label="Настройка"><RedGear /></TaskButton>
        <TaskButton $w={58} aria-label="Браузер"><BlueC /></TaskButton>
        <TaskButton $w={58} $open $active aria-label="КОМПАС-3D"><Kompas /></TaskButton>
        <TaskButton $w={58} $open aria-label="Paint"><Paint /></TaskButton>
        <Tray>
          <Language>RU</Language>
          <TrayButton aria-label="Скрытые значки"><Icon w={8} h={5}><path d="M0 5h8L4 0z" fill="#fff" stroke="none" /></Icon></TrayButton>
          <TrayButton aria-label="Windows"><Icon size={15}><path d="M0 2l6.500-1v6H0zM7.500 1L15 0v7H7.500zM0 8h6.500v6L0 13zM7.500 8H15v7l-7.500-1z" fill="#fff" stroke="none" /></Icon></TrayButton>
          <TrayButton aria-label="Браузер"><BlueC size={18} /></TrayButton>
          <TrayButton aria-label="Центр поддержки"><Icon><path d="M2.500 1v14" stroke="#fff" /><path d="M3 2c3-1 5 2 9 0v7c-4 2-6-1-9 0z" fill="#fff" stroke="none" /><circle cx="11" cy="11" r="4.500" fill="#c8302c" stroke="#fff" strokeWidth={.6} /><path d="M9 9l4 4M13 9l-4 4" stroke="#fff" strokeWidth={1.400} /></Icon></TrayButton>
          <TrayButton aria-label="Сеть"><Icon><path d="M4.500 4.500h10v7h-10zM7 14.500h6M9.500 12v2" stroke="#fff" strokeWidth={1.300} /><path d="M1.500 1v4h3V1M3 5v8h2" stroke="#fff" strokeWidth={1.200} /></Icon></TrayButton>
          <TrayButton aria-label="Громкость"><Icon><path d="M1 5.500h3L8 2v12l-4-3.500H1z" fill="#fff" stroke="none" /><path d="M10 6q1.500 2 0 4M12 4q3 4 0 8M14 2.500q4 5.500 0 11" stroke="#fff" /></Icon></TrayButton>
          <Clock>17:57<br />12.07.2016</Clock>
          <ShowDesktop aria-label="Показать рабочий стол" />
        </Tray>
      </TaskBar>
    </Shell>
  );
}
